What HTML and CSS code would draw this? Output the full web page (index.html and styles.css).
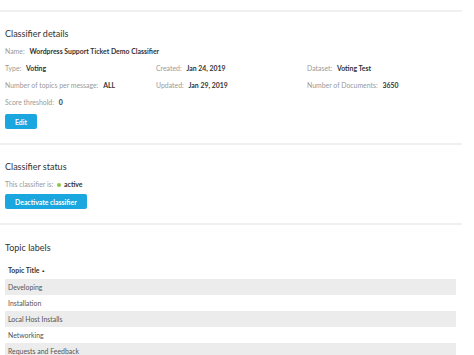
FILE: index.html
```html
<!DOCTYPE html>
<html lang="en">
<head>
    <meta charset="UTF-8">
    <title>Classifier</title>
    <link rel="stylesheet" href="styles.css">
</head>
<body>
    <div class="page">
        <section class="section">
            <h2>Classifier details</h2>
            <div class="row">
                <span class="label">Name:</span> <span class="value">Wordpress Support Ticket Demo Classifier</span>
            </div>
            <div class="grid">
                <div class="row"><span class="label">Type:</span> <span class="value">Voting</span></div>
                <div class="row"><span class="label">Created:</span> <span class="value">Jan 24, 2019</span></div>
                <div class="row"><span class="label">Dataset:</span> <span class="value">Voting Test</span></div>
                <div class="row"><span class="label">Number of topics per message:</span> <span class="value">ALL</span></div>
                <div class="row"><span class="label">Updated:</span> <span class="value">Jan 29, 2019</span></div>
                <div class="row"><span class="label">Number of Documents:</span> <span class="value">3650</span></div>
            </div>
            <div class="row">
                <span class="label">Score threshold:</span> <span class="value">0</span>
            </div>
            <button class="btn">Edit</button>
        </section>

        <section class="section">
            <h2>Classifier status</h2>
            <div class="row">
                <span class="label">This classifier is:</span> <span class="dot"></span><span class="value">active</span>
            </div>
            <button class="btn tight">Deactivate classifier</button>
        </section>

        <section class="section last">
            <h2>Topic labels</h2>
            <table class="topics">
                <thead>
                    <tr><th>Topic Title <span class="sort">&#9650;</span></th></tr>
                </thead>
                <tbody>
                    <tr><td>Developing</td></tr>
                    <tr><td>Installation</td></tr>
                    <tr><td>Local Host Installs</td></tr>
                    <tr><td>Networking</td></tr>
                    <tr><td>Requests and Feedback</td></tr>
                </tbody>
            </table>
        </section>
    </div>
</body>
</html>
```

FILE: styles.css
```css
body {
    font-family: Lato, "Open Sans", sans-serif;
    background-color: #fff;
    color: #333;
    margin: 0;
    padding: 0;
}

.page {
    width: 462px;
    padding-top: 10px;
}

.section {
    border-top: 2px solid #f0f0f0;
    padding: 15px 5px 14px 5px;
}

.section.last {
    padding-top: 16px;
    padding-bottom: 0;
}

h2 {
    font-size: 9px;
    font-weight: normal;
    color: #333;
    margin: 0 0 2px 0;
    line-height: 14px;
}

.row {
    font-size: 6.9px;
    line-height: 17px;
}

.label {
    color: #9a9a9a;
}

.value {
    font-weight: bold;
    color: #333;
    margin-left: 3px;
}

.grid {
    display: grid;
    grid-template-columns: 151px 151px 150px;
}

.btn {
    display: block;
    margin-top: 3px;
    height: 15px;
    padding: 0 10px;
    background-color: #1aa6de;
    color: #fff;
    border: none;
    border-radius: 2px;
    font-family: Lato, sans-serif;
    font-size: 6.9px;
    font-weight: bold;
}

.btn.tight {
    margin-top: 1px;
}

.dot {
    display: inline-block;
    width: 4px;
    height: 4px;
    border-radius: 50%;
    background-color: #8dc63f;
    margin-left: 2px;
    vertical-align: 0;
}

.topics {
    width: 451px;
    margin-top: 6px;
    border-collapse: collapse;
    font-size: 6.9px;
}

.topics th {
    text-align: left;
    font-weight: bold;
    color: #333;
    padding: 0 3px;
    height: 18px;
}

.sort {
    font-size: 4px;
    vertical-align: 1px;
}

.topics td {
    padding: 0 3px;
    height: 16px;
    color: #555;
}

.topics tbody tr:nth-child(odd) td {
    background-color: #ececec;
}
```
